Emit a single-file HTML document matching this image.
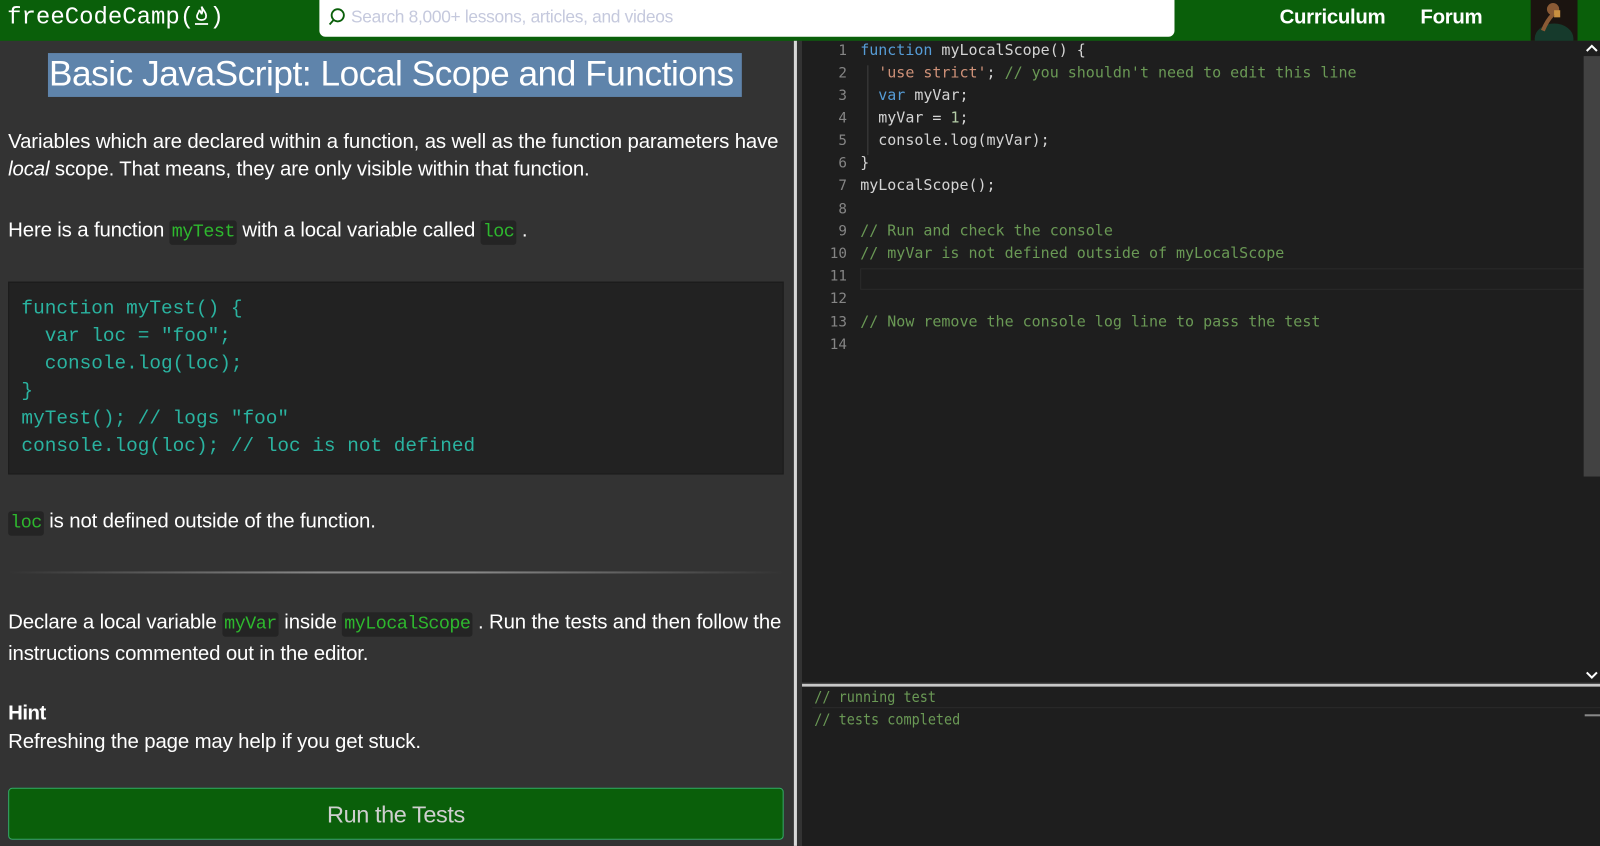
<!DOCTYPE html>
<html><head><meta charset="utf-8">
<style>
*{margin:0;padding:0;box-sizing:border-box}
html,body{width:1600px;height:846px;overflow:hidden;background:#333}
#w{position:absolute;left:0;top:0;width:1568px;height:829px;transform:scale(1.020408);transform-origin:0 0;font-family:"Liberation Sans",sans-serif;color:#fff;background:#333}
.nav{position:absolute;left:0;top:0;width:1568px;height:40px;background:#0a5f0a}
.logo{position:absolute;left:7px;top:4px;font-family:"Liberation Mono",monospace;font-size:23.5px;color:#fff;white-space:nowrap}
.search{position:absolute;left:313px;top:0;width:838px;height:36px;background:#fff;border-radius:0 0 6px 6px}
.search span{position:absolute;left:31px;top:7px;color:#c5c9dd;font-size:17px;letter-spacing:-0.3px}
.navl{position:absolute;top:6px;font-size:20px;font-weight:bold;color:#fff;letter-spacing:-0.3px}
.title{position:absolute;left:47px;top:52px;width:680px;height:43px;background:#5f84ab;font-size:34.5px;color:#fff;line-height:43px;letter-spacing:-0.45px;padding-left:1px;white-space:nowrap;overflow:hidden}
.p{position:absolute;left:8px;font-size:20px;letter-spacing:-0.15px;white-space:nowrap}
.c{font-family:"Liberation Mono",monospace;color:#2eb82e;background:#242424;padding:2px 2px;border-radius:3px;letter-spacing:-0.5px;font-size:18px}
.code{position:absolute;left:8px;top:276px;width:760px;height:189px;background:#222;border:1px solid #1a1a1a;font-family:"Liberation Mono",monospace;font-size:19px;color:#2ab3a0;line-height:27px;padding:12px 0 0 12px;white-space:pre}
.hr{position:absolute;left:8px;top:560px;width:760px;height:2px;background:linear-gradient(90deg,#333,#888 40%,#888 60%,#333)}
.btn{position:absolute;left:8px;top:772px;width:760px;height:51px;background:#0a5f0a;border:1px solid #3a6;border-radius:4px;font-size:23px;color:#cfcfcf;text-align:center;line-height:51px;letter-spacing:-0.4px}
.divider{position:absolute;left:778px;top:40px;width:8px;height:789px;background:#333;border-left:3px solid #d8d8d8}
.ed{position:absolute;left:786px;top:40px;width:782px;height:630px;background:#1e1e1e}
.ln{position:absolute;left:786px;width:44px;text-align:right;font-family:"DejaVu Sans Mono",monospace;font-size:14px;color:#858585}
.cl{position:absolute;left:843px;font-family:"DejaVu Sans Mono",monospace;font-size:14.7px;color:#d4d4d4;white-space:pre}
.k{color:#569cd6}.s{color:#ce9178}.m{color:#6a9955}.n{color:#b5cea8}
.sep{position:absolute;left:786px;top:669px;width:782px;height:4px;background:#c8c8c8;border-top:1px solid #111}
.con{position:absolute;left:786px;top:673px;width:782px;height:156px;background:#1e1e1e}
.cc{position:absolute;left:798px;font-family:"DejaVu Sans Mono",monospace;font-size:15px;color:#6a9955;transform:scaleX(.88);transform-origin:left}
</style></head><body><div id="w">
<div class="nav">
<div class="logo">freeCodeCamp(<svg width="15" height="22" viewBox="0 0 14 20" style="vertical-align:-3px"><path d="M7 2C9 6 12 8 11 12C10 15 4 15 3 12C2 9 5 8 5 5C6 7 7 8 7 9C8 7 8 5 7 2Z" fill="none" stroke="#fff" stroke-width="1.6"/><line x1="1" y1="18" x2="13" y2="18" stroke="#fff" stroke-width="1.6"/></svg>)</div>
<div class="search">
<svg style="position:absolute;left:8px;top:7px" width="20" height="20" viewBox="0 0 20 20"><circle cx="10" cy="8" r="6" fill="none" stroke="#0a5f0a" stroke-width="1.8"/><line x1="6" y1="12.5" x2="2" y2="17" stroke="#0a5f0a" stroke-width="1.8"/></svg>
<span>Search 8,000+ lessons, articles, and videos</span></div>
<div class="navl" style="left:1254px">Curriculum</div>
<div class="navl" style="left:1392px">Forum</div>
<svg style="position:absolute;left:1500px;top:0" width="46" height="40"><rect width="46" height="40" fill="#1b1410"/><ellipse cx="23" cy="38" rx="19" ry="15" fill="#163a2c"/><circle cx="22" cy="9" r="6" fill="#8a5a35"/><rect x="23" y="10" width="6" height="7" fill="#c89040"/><path d="M12 30 Q16 20 22 14" stroke="#8a5a35" stroke-width="4" fill="none"/></svg>
</div>
<div class="title">Basic JavaScript: Local Scope and Functions</div>
<div class="p" style="top:128px">Variables which are declared within a function, as well as the function parameters have</div>
<div class="p" style="top:155px"><i>local</i> scope. That means, they are only visible within that function.</div>
<div class="p" style="top:215px">Here is a function <span class="c">myTest</span> with a local variable called <span class="c">loc</span> .</div>
<div class="code">function myTest() {
  var loc = "foo";
  console.log(loc);
}
myTest(); // logs "foo"
console.log(loc); // loc is not defined</div>
<div class="p" style="top:500px"><span class="c">loc</span> is not defined outside of the function.</div>
<div class="hr"></div>
<div class="p" style="top:599px">Declare a local variable <span class="c">myVar</span> inside <span class="c">myLocalScope</span> . Run the tests and then follow the</div>
<div class="p" style="top:630px">instructions commented out in the editor.</div>
<div class="p" style="top:688px;font-weight:bold;letter-spacing:-0.5px">Hint</div>
<div class="p" style="top:716px">Refreshing the page may help if you get stuck.</div>
<div class="btn">Run the Tests</div>
<div class="divider"></div>
<div class="ed"></div>
<div style="position:absolute;left:843px;top:263px;width:725px;height:21px;border:1px solid #2a2a2a"></div>
<div style="position:absolute;left:850px;top:64px;width:1px;height:88px;background:#404040"></div>
<div style="position:absolute;left:1552px;top:55px;width:16px;height:412px;background:#424242"></div>
<svg style="position:absolute;left:1552px;top:42px" width="16" height="10"><path d="M3 8L8 3L13 8" stroke="#fff" stroke-width="2" fill="none"/></svg>
<svg style="position:absolute;left:1552px;top:657px" width="16" height="10"><path d="M3 2L8 7L13 2" stroke="#fff" stroke-width="2" fill="none"/></svg>

<div class="ln" style="top:42px">1</div><div class="cl" style="top:41px"><span class="k">function</span> myLocalScope() {</div>
<div class="ln" style="top:64px">2</div><div class="cl" style="top:63px">  <span class="s">'use strict'</span>; <span class="m">// you shouldn't need to edit this line</span></div>
<div class="ln" style="top:86px">3</div><div class="cl" style="top:85px">  <span class="k">var</span> myVar;</div>
<div class="ln" style="top:108px">4</div><div class="cl" style="top:107px">  myVar = <span class="n">1</span>;</div>
<div class="ln" style="top:130px">5</div><div class="cl" style="top:129px">  console.log(myVar);</div>
<div class="ln" style="top:152px">6</div><div class="cl" style="top:151px">}</div>
<div class="ln" style="top:174px">7</div><div class="cl" style="top:173px">myLocalScope();</div>
<div class="ln" style="top:197px">8</div>
<div class="ln" style="top:219px">9</div><div class="cl" style="top:218px"><span class="m">// Run and check the console</span></div>
<div class="ln" style="top:241px">10</div><div class="cl" style="top:240px"><span class="m">// myVar is not defined outside of myLocalScope</span></div>
<div class="ln" style="top:263px">11</div>
<div class="ln" style="top:285px">12</div>
<div class="ln" style="top:308px">13</div><div class="cl" style="top:307px"><span class="m">// Now remove the console log line to pass the test</span></div>
<div class="ln" style="top:330px">14</div>
<div class="sep"></div>
<div class="con"></div>
<div style="position:absolute;left:796px;top:674px;width:772px;height:20px;border-bottom:1px solid #2a2a2a"></div>
<div class="cc" style="top:674px">// running test</div>
<div class="cc" style="top:696px">// tests completed</div>
<div style="position:absolute;left:1553px;top:700px;width:15px;height:2px;background:#888"></div>
</div></body></html>
